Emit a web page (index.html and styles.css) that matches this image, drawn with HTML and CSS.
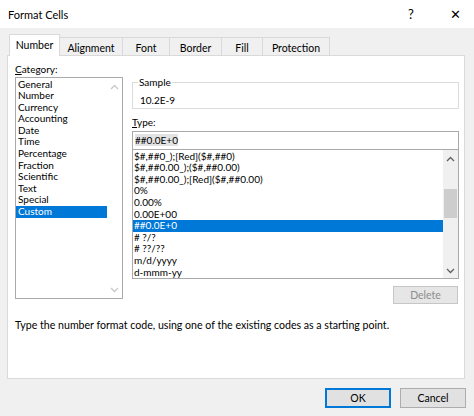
FILE: index.html
```html
<!DOCTYPE html>
<html lang="en">
<head>
    <meta charset="UTF-8">
    <meta name="viewport" content="width=device-width, initial-scale=1.0">
    <title>Format Cells</title>
    <link rel="stylesheet" href="styles.css">
</head>
<body>

    <div class="titlebar">
        <span class="title">Format Cells</span>
        <span class="help">?</span>
        <span class="close">&#x2715;</span>
    </div>

    <div class="tabs">
        <div class="tab active tab-number">Number</div>
        <div class="tab tab-alignment">Alignment</div>
        <div class="tab tab-font">Font</div>
        <div class="tab tab-border">Border</div>
        <div class="tab tab-fill">Fill</div>
        <div class="tab tab-protection">Protection</div>
    </div>

    <div class="panel">
        <div class="columns">
            <div class="left-col">
                <div class="label"><u>C</u>ategory:</div>
                <div class="listbox category-list">
                    <div class="items">
                        <div class="item">General</div>
                        <div class="item">Number</div>
                        <div class="item">Currency</div>
                        <div class="item">Accounting</div>
                        <div class="item">Date</div>
                        <div class="item">Time</div>
                        <div class="item">Percentage</div>
                        <div class="item">Fraction</div>
                        <div class="item">Scientific</div>
                        <div class="item">Text</div>
                        <div class="item">Special</div>
                        <div class="item selected">Custom</div>
                    </div>
                    <div class="scrollbar disabled">
                        <svg width="9" height="6" viewBox="0 0 9 6"><polyline points="1,5 4.5,1.5 8,5" fill="none" stroke="currentColor" stroke-width="1.3"/></svg>
                        <svg width="9" height="6" viewBox="0 0 9 6"><polyline points="1,1 4.5,4.5 8,1" fill="none" stroke="currentColor" stroke-width="1.3"/></svg>
                    </div>
                </div>
            </div>

            <div class="right-col">
                <fieldset class="sample">
                    <legend>Sample</legend>
                    <div class="sample-value">10.2E-9</div>
                </fieldset>

                <div class="label type-label"><u>T</u>ype:</div>
                <div class="type-input"><span class="sel-text">##0.0E+0</span></div>
                <div class="listbox type-list">
                    <div class="items">
                        <div class="item">$#,##0_);[Red]($#,##0)</div>
                        <div class="item">$#,##0.00_);($#,##0.00)</div>
                        <div class="item">$#,##0.00_);[Red]($#,##0.00)</div>
                        <div class="item">0%</div>
                        <div class="item">0.00%</div>
                        <div class="item">0.00E+00</div>
                        <div class="item selected">##0.0E+0</div>
                        <div class="item"># ?/?</div>
                        <div class="item"># ??/??</div>
                        <div class="item">m/d/yyyy</div>
                        <div class="item">d-mmm-yy</div>
                    </div>
                    <div class="scrollbar">
                        <svg width="9" height="6" viewBox="0 0 9 6"><polyline points="1,5 4.5,1.5 8,5" fill="none" stroke="currentColor" stroke-width="1.3"/></svg>
                        <div class="track"><div class="thumb"></div></div>
                        <svg width="9" height="6" viewBox="0 0 9 6"><polyline points="1,1 4.5,4.5 8,1" fill="none" stroke="currentColor" stroke-width="1.3"/></svg>
                    </div>
                </div>
                <button class="btn delete-btn" disabled>Delete</button>
            </div>
        </div>

        <p class="hint">Type the number format code, using one of the existing codes as a starting point.</p>
    </div>

    <div class="footer">
        <button class="btn ok-btn">OK</button>
        <button class="btn">Cancel</button>
    </div>

</body>
</html>
```

FILE: styles.css
```css
* {
  box-sizing: border-box;
}

body {
  margin: 0;
  width: 474px;
  height: 416px;
  overflow: hidden;
  background: #f0f0f0;
  font-family: 'Lato', 'Noto Sans', sans-serif;
  font-size: 10px;
  color: #000;
}

.titlebar {
  height: 28px;
  background: #fff;
  display: flex;
  align-items: center;
  padding-left: 8px;
  font-size: 11px;
}

.title {
  flex: 1;
}

.help {
  width: 14px;
  margin-right: 28px;
  font-size: 13px;
}

.close {
  width: 12px;
  margin-right: 12px;
  font-size: 13px;
}

/* tabs */
.tabs {
  display: flex;
  align-items: flex-end;
  margin: 6px 0 -1px 9px;
  height: 22px;
  position: relative;
  z-index: 1;
  font-size: 10.5px;
}

.tab {
  height: 19px;
  border: 1px solid #d9d9d9;
  border-left: none;
  border-bottom: none;
  display: flex;
  align-items: center;
  justify-content: center;
  padding-top: 1px;
}

.tab.active {
  height: 22px;
  background: #fff;
  border-left: 1px solid #d9d9d9;
  padding-top: 0;
  padding-bottom: 2px;
}

.tab-number { width: 51px; }
.tab-alignment { width: 63px; }
.tab-font { width: 47px; }
.tab-border { width: 52px; }
.tab-fill { width: 41px; }
.tab-protection { width: 67px; }

/* main panel */
.panel {
  margin: 0 9px 0 7px;
  height: 324px;
  background: #fff;
  border: 1px solid #d9d9d9;
  padding: 6px 0 0 7px;
}

.columns {
  display: flex;
  gap: 9px;
}

.left-col {
  width: 108px;
}

.label {
  height: 14px;
  line-height: 14px;
  margin-bottom: 1px;
}

.listbox {
  display: flex;
  border: 1px solid #a9a9a9;
  background: #fff;
  overflow: hidden;
}

.items {
  flex: 1;
  padding-top: 1px;
}

.item {
  height: 11.6px;
  line-height: 11.6px;
  padding-left: 2px;
  white-space: nowrap;
}

.item.selected {
  background: #0078d7;
  color: #fff;
}

.category-list {
  height: 222px;
}

.category-list .items {
  padding-top: 0.5px;
}

.scrollbar {
  width: 15px;
  display: flex;
  flex-direction: column;
  align-items: center;
  justify-content: space-between;
  padding: 6px 0 5px;
  color: #606060;
  background: #f0f0f0;
}

.scrollbar.disabled {
  background: #fff;
  color: #c8c8c8;
}

.track {
  flex: 1;
  width: 100%;
  padding-top: 27px;
}

.thumb {
  height: 29px;
  margin: 0 1px;
  background: #cdcdcd;
}

.right-col {
  width: 327px;
  display: flex;
  flex-direction: column;
}

.sample {
  margin: 14px 0 0 0;
  padding: 0 4px 2px 7px;
  border: 1px solid #dcdcdc;
  height: 33px;
}

.sample legend {
  padding: 0 1px;
  margin-left: -2px;
  line-height: 12px;
}

.sample-value {
  line-height: 12px;
  margin-top: 6px;
}

.type-label {
  margin-top: 7px;
  line-height: 13px;
}

.type-input {
  height: 18px;
  border: 1px solid #a9a9a9;
  border-bottom: none;
  padding: 2px 0 0 2px;
  line-height: 13px;
}

.sel-text {
  background: #e3e3e3;
}

.type-list {
  height: 130px;
}

.type-list .items {
  padding-top: 0.7px;
}

.type-list .item {
  padding-left: 1px;
}

.type-list .scrollbar {
  padding: 6px 0 4px;
}

.btn {
  font-family: inherit;
  font-size: 10.5px;
  height: 20px;
  width: 66px;
  background: #e1e1e1;
  border: 1px solid #adadad;
  color: #000;
  padding: 0;
}

.delete-btn {
  align-self: flex-end;
  margin: 7px 1px 0 0;
  height: 18px;
  width: 65px;
  color: #8d8d8d;
  border-color: #c6c6c6;
  background: #e6e6e6;
}

.hint {
  margin: 15px 0 0 0;
  line-height: 12px;
  font-size: 10.6px;
}

/* bottom buttons */
.footer {
  display: flex;
  justify-content: flex-end;
  gap: 9px;
  margin: 9px 8px 0 0;
}

.ok-btn {
  border: 1px solid #0078d7;
  box-shadow: inset 0 0 0 1px #0078d7;
}
```
